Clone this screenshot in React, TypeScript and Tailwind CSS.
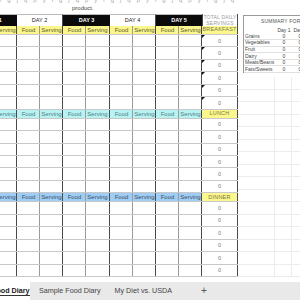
import React from 'react';

type Col = { w: string; kind: 'Food' | 'Serving'; edge: string; clip?: string };

const cols: Col[] = [
  { w: 'w-[17px]', kind: 'Serving', edge: 'border-r-[#4a4a4a]', clip: 'ml-[-6px]' },
  { w: 'w-[23px]', kind: 'Food', edge: 'border-r-[#9a9a9a]' },
  { w: 'w-[23px]', kind: 'Serving', edge: 'border-r-[#4a4a4a]' },
  { w: 'w-[23px]', kind: 'Food', edge: 'border-r-[#9a9a9a]' },
  { w: 'w-[24px]', kind: 'Serving', edge: 'border-r-[#4a4a4a]' },
  { w: 'w-[23px]', kind: 'Food', edge: 'border-r-[#9a9a9a]' },
  { w: 'w-[23px]', kind: 'Serving', edge: 'border-r-[#4a4a4a]' },
  { w: 'w-[23px]', kind: 'Food', edge: 'border-r-[#9a9a9a]' },
  { w: 'w-[23px]', kind: 'Serving', edge: 'border-r-[#4a4a4a]' },
];

const days = [
  { label: 'DAY 1', w: 'w-[17px]', dark: true, clip: true },
  { label: 'DAY 2', w: 'w-[46px]', dark: false },
  { label: 'DAY 3', w: 'w-[47px]', dark: true },
  { label: 'DAY 4', w: 'w-[46px]', dark: false },
  { label: 'DAY 5', w: 'w-[46px]', dark: true },
];

const summary = ['Grains', 'Vegetables', 'Fruit', 'Dairy', 'Meats/Beans', 'Fats/Sweets'];

// label row: Food / Serving across the day columns, meal name in the totals column
const LabelRow = ({ bg, text, meal }: { bg: string; text: string; meal: string }) => (
  <div className="flex h-[9px] border-b border-b-[#c8c8c8]">
    {cols.map((c, i) => (
      <div key={i} className={`${c.w} ${bg} ${text} border-r ${c.edge} overflow-hidden flex items-center`}>
        <div className={`${c.clip ?? ''} w-[23px] shrink-0 text-center text-[6px] leading-none`}>{c.kind}</div>
      </div>
    ))}
    <div className="w-[36px] bg-[#fbf78c] text-[#7a7a48] border-r border-r-[#4a4a4a] flex items-center justify-center text-[5.5px] leading-none tracking-[0.2px]">
      {meal}
    </div>
  </div>
);

const DataRow = ({ marked }: { marked?: boolean }) => (
  <div className="flex h-[12.5px] border-b border-b-[#c8c8c8]">
    {cols.map((c, i) => (
      <div key={i} className={`${c.w} border-r ${c.edge}`} />
    ))}
    <div className="relative w-[36px] border-r border-r-[#4a4a4a] flex items-center justify-center text-[5.5px] text-[#777]">
      {marked && (
        <span className="absolute left-0 top-0 w-0 h-0 border-t-[3px] border-t-[#111] border-r-[3px] border-r-transparent" />
      )}
      0
    </div>
  </div>
);

export default function App() {
  return (
    <div className="w-[300px] h-[300px] overflow-hidden bg-white font-['Liberation_Sans',Arial,sans-serif] text-[#333]">
      <div className="flex h-[277px]">
        {/* main diary grid */}
        <div className="w-[238px] flex flex-col shrink-0">
          <div className="h-[14px] relative overflow-hidden">
            <div className="h-[3px] overflow-hidden">
              <div className="mt-[-4px] text-[6px] text-[#aaa] whitespace-nowrap tracking-[6px]">lgjqpylgjqpylgjqpylgjqpylgjqpylgjqpy</div>
            </div>
            <div className="pl-[72px] pt-[2px] text-[6px] leading-none text-[#444]">product.</div>
          </div>
          <div className="flex h-[12px]">
            {days.map((d) => (
              <div
                key={d.label}
                className={`${d.w} overflow-hidden flex items-center border-t border-t-[#bbb] ${
                  d.dark ? 'bg-[#0b0b0b] text-white font-bold' : 'bg-white text-[#222] border-r border-r-[#4a4a4a]'
                }`}
              >
                <div className={`${d.clip ? 'ml-[-29px] w-[46px]' : 'w-full'} shrink-0 text-center text-[5.5px] leading-none`}>
                  {d.label}
                </div>
              </div>
            ))}
            <div className="w-[36px] border-l border-r border-[#4a4a4a] flex flex-col items-center justify-center text-[5px] leading-[6px] text-[#9a9a9a] tracking-[0.2px]">
              <span>TOTAL DAILY</span>
              <span>SERVINGS</span>
            </div>
          </div>
          <LabelRow bg="bg-[#fbf78c]" text="text-[#5a5a30]" meal="BREAKFAST" />
          {[0, 1, 2, 3, 4, 5].map((i) => (
            <DataRow key={`b${i}`} marked />
          ))}
          <LabelRow bg="bg-[#b8f3f3]" text="text-[#4f7d80]" meal="LUNCH" />
          {[0, 1, 2, 3, 4, 5].map((i) => (
            <DataRow key={`l${i}`} />
          ))}
          <LabelRow bg="bg-[#9fcdf6]" text="text-[#3d4f63]" meal="DINNER" />
          {[0, 1, 2, 3, 4, 5].map((i) => (
            <DataRow key={`d${i}`} />
          ))}
        </div>

        {/* summary side */}
        <div className="flex-1 flex flex-col overflow-hidden">
          <div className="h-[16px]" />
          <div className="ml-[5px] border-l border-t border-[#9a9a9a] w-[80px] text-[5px] leading-none text-[#444]">
            <div className="h-[11px] flex items-center pl-[17px] whitespace-nowrap tracking-[0.2px] text-[#555]">SUMMARY FOR 5 DAYS</div>
            <div className="h-[6.5px] flex items-center">
              <div className="w-[32px]" />
              <div className="w-[16px] text-center">Day 1</div>
              <div className="w-[16px] text-center">Day 2</div>
            </div>
            {summary.map((s) => (
              <div key={s} className="h-[6.6px] flex items-center border-b border-b-[#e0e0e0]">
                <div className="w-[32px] pl-[1px] whitespace-nowrap">{s}</div>
                <div className="w-[16px] text-center">0</div>
                <div className="w-[16px] text-center">0</div>
              </div>
            ))}
          </div>
          <div className="flex-1 flex flex-col mt-[4px]">
            {Array.from({ length: 16 }).map((_, i) => (
              <div key={i} className="h-[12.5px] flex border-b border-b-[#ececec]">
                <div className="w-[37px] border-r border-r-[#ececec]" />
                <div className="w-[17px] border-r border-r-[#ececec]" />
              </div>
            ))}
          </div>
        </div>
      </div>

      {/* sheet tabs */}
      <div className="h-[5px] bg-white" />
      <div className="h-[18px] bg-[#e9e9e9] flex items-center text-[7.2px] text-[#444]">
        <div className="h-full w-[30px] bg-white overflow-hidden flex items-center">
          <span className="ml-[-8px] whitespace-nowrap font-semibold text-[#222] border-b border-b-[#333] leading-[9px]">Food Diary</span>
        </div>
        <div className="w-[9px]" />
        <span className="whitespace-nowrap">Sample Food Diary</span>
        <div className="w-[14px]" />
        <span className="whitespace-nowrap">My Diet vs. USDA</span>
        <div className="w-[29px]" />
        <span className="text-[10px] leading-none text-[#555]">+</span>
      </div>
    </div>
  );
}
